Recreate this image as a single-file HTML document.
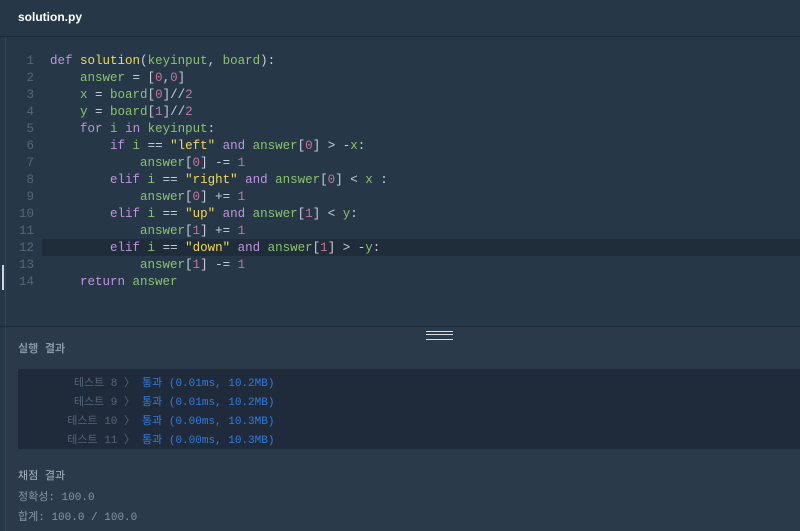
<!DOCTYPE html><html><head><style>
html,body{margin:0;width:800px;height:531px;overflow:hidden;}
body{background:#263747;position:relative;font-family:"Liberation Mono","Noto Sans CJK KR",monospace;}
.hdr{position:absolute;left:0;top:0;width:800px;height:36px;background:#263747;border-bottom:1px solid #1d2a38;}
.hdr span{position:absolute;left:18px;top:10px;font:bold 12px "Liberation Sans",sans-serif;color:#fff;}
.lb{position:absolute;left:5px;top:37px;width:1px;height:494px;background:#34475a;}
.code{position:absolute;left:0;top:53px;width:800px;font-size:12.5px;line-height:17px;color:#c6cfd9;}
.ln{display:flex;height:17px;}
.ln>span{white-space:pre;}
.n{width:34px;text-align:right;color:#566676;margin-right:16px;}
.k{color:#c192e0}.f{color:#f2d95b}.g{color:#8cc26d}.s{color:#f2d95b}.m{color:#c8739a}.w{color:#c6cfd9}
.hl{position:absolute;left:42px;top:239px;width:758px;height:17px;background:#1f2c3a;}
.cur{position:absolute;left:2px;top:265px;width:2px;height:25px;background:#cfd6dd;}
.div{position:absolute;left:0;top:326px;width:800px;height:1px;background:#1d2a38;}
.bot{position:absolute;left:6px;top:327px;width:794px;height:204px;background:#2a3a4b;}
.handle{position:absolute;left:426px;top:331px;width:27px;height:7px;border-top:1px solid #ddd;border-bottom:1px solid #ddd;}
.handle:after{content:"";position:absolute;left:0;top:2px;width:27px;height:1px;background:#ddd;}
.t{position:absolute;font-size:11px;color:#8596a6;white-space:pre;}
.res{position:absolute;left:18px;top:369px;width:782px;height:80px;background:#1f2a3b;font-size:11px;}
.r{position:absolute;left:0;height:19px;width:782px;}
.r span{white-space:pre;}
.r .a{position:absolute;right:665px;color:#56667a;}
.r .b{position:absolute;left:124px;color:#2f7de1;}
</style></head><body>
<div class="hdr"><span>solution.py</span></div>
<div class="lb"></div>
<div class="hl"></div>
<div class="code">
<div class="ln"><span class="n">1</span><span><span class="k">def</span> <span class="f">solution</span>(<span class="g">keyinput</span>, <span class="g">board</span>):</span></div>
<div class="ln"><span class="n">2</span><span>    <span class="g">answer</span> = [<span class="m">0</span>,<span class="m">0</span>]</span></div>
<div class="ln"><span class="n">3</span><span>    <span class="g">x</span> = <span class="g">board</span>[<span class="m">0</span>]//<span class="m">2</span></span></div>
<div class="ln"><span class="n">4</span><span>    <span class="g">y</span> = <span class="g">board</span>[<span class="m">1</span>]//<span class="m">2</span></span></div>
<div class="ln"><span class="n">5</span><span>    <span class="k">for</span> <span class="g">i</span> <span class="k">in</span> <span class="g">keyinput</span>:</span></div>
<div class="ln"><span class="n">6</span><span>        <span class="k">if</span> <span class="g">i</span> == <span class="s">"left"</span> <span class="k">and</span> <span class="g">answer</span>[<span class="m">0</span>] &gt; -<span class="g">x</span>:</span></div>
<div class="ln"><span class="n">7</span><span>            <span class="g">answer</span>[<span class="m">0</span>] -= <span class="m">1</span></span></div>
<div class="ln"><span class="n">8</span><span>        <span class="k">elif</span> <span class="g">i</span> == <span class="s">"right"</span> <span class="k">and</span> <span class="g">answer</span>[<span class="m">0</span>] &lt; <span class="g">x</span> :</span></div>
<div class="ln"><span class="n">9</span><span>            <span class="g">answer</span>[<span class="m">0</span>] += <span class="m">1</span></span></div>
<div class="ln"><span class="n">10</span><span>        <span class="k">elif</span> <span class="g">i</span> == <span class="s">"up"</span> <span class="k">and</span> <span class="g">answer</span>[<span class="m">1</span>] &lt; <span class="g">y</span>:</span></div>
<div class="ln"><span class="n">11</span><span>            <span class="g">answer</span>[<span class="m">1</span>] += <span class="m">1</span></span></div>
<div class="ln"><span class="n">12</span><span>        <span class="k">elif</span> <span class="g">i</span> == <span class="s">"down"</span> <span class="k">and</span> <span class="g">answer</span>[<span class="m">1</span>] &gt; -<span class="g">y</span>:</span></div>
<div class="ln"><span class="n">13</span><span>            <span class="g">answer</span>[<span class="m">1</span>] -= <span class="m">1</span></span></div>
<div class="ln"><span class="n">14</span><span>    <span class="k">return</span> <span class="g">answer</span></span></div>
</div>
<div class="cur"></div>
<div class="div"></div>
<div class="bot"></div>
<div class="handle"></div>
<div class="t" style="left:18px;top:340px;font-weight:bold">실행 결과</div>
<div class="res">
<div class="r" style="top:5px"><span class="a">테스트 8 〉</span><span class="b">통과 (0.01ms, 10.2MB)</span></div>
<div class="r" style="top:24px"><span class="a">테스트 9 〉</span><span class="b">통과 (0.01ms, 10.2MB)</span></div>
<div class="r" style="top:43px"><span class="a">테스트 10 〉</span><span class="b">통과 (0.00ms, 10.3MB)</span></div>
<div class="r" style="top:62px"><span class="a">테스트 11 〉</span><span class="b">통과 (0.00ms, 10.3MB)</span></div>
</div>
<div class="t" style="left:18px;top:467px;color:#a9b5c1">채점 결과</div>
<div class="t" style="left:18px;top:488px">정확성: 100.0</div>
<div class="t" style="left:18px;top:508px">합계: 100.0 / 100.0</div>
</body></html>
